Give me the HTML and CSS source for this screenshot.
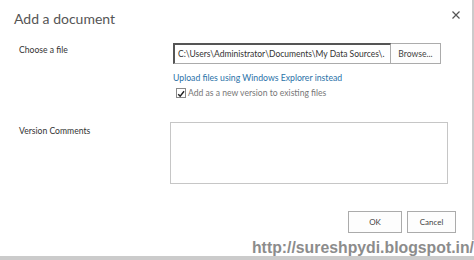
FILE: index.html
```html
<!DOCTYPE html>
<html lang="en">
<head>
  <meta charset="UTF-8" />
  <title>Add a document</title>
  <link rel="stylesheet" href="styles.css">
</head>
<body>
  <div class="dialog">
    <header class="dialog-head">
      <h1>Add a document</h1>
      <svg class="close" width="8" height="8" viewBox="0 0 8 8"><path d="M0.5 0.5 L7.5 7.5 M7.5 0.5 L0.5 7.5" stroke="#555" stroke-width="1.2"/></svg>
    </header>

    <div class="row">
      <label class="field-label">Choose a file</label>
      <div class="field">
        <div class="file-picker">
          <div class="file-path">C:\Users\Administrator\Documents\My Data Sources\.</div>
          <button class="btn browse">Browse...</button>
        </div>
        <a class="explorer-link" href="#">Upload files using Windows Explorer instead</a>
        <label class="check">
          <span class="box">
            <svg width="10" height="10" viewBox="0 0 10 10"><path d="M1.5 5.2 L4 7.8 L8.8 1.6" fill="none" stroke="#222" stroke-width="1.8"/></svg>
          </span>
          Add as a new version to existing files
        </label>
      </div>
    </div>

    <div class="row comments-row">
      <label class="field-label">Version Comments</label>
      <div class="field">
        <textarea class="comments"></textarea>
      </div>
    </div>

    <div class="actions">
      <button class="btn ok">OK</button>
      <button class="btn cancel">Cancel</button>
    </div>

    <div class="watermark">http://sureshpydi.blogspot.in/</div>
  </div>
</body>
</html>
```

FILE: styles.css
```css
body {
  margin: 0;
  width: 474px;
  height: 260px;
  overflow: hidden;
  background: #fff;
  font-family: Lato, 'Open Sans', sans-serif;
  color: #444;
}

.dialog {
  position: relative;
  box-sizing: border-box;
  width: 474px;
  height: 260px;
  border-right: 2px solid #cbcbcb;
  border-bottom: 4px solid #cbcbcb;
}

.dialog-head {
  display: flex;
  justify-content: space-between;
  align-items: flex-start;
  padding: 10px 12px 0 14px;
  height: 26px;
}

.dialog-head h1 {
  margin: 0;
  font-size: 14px;
  font-weight: 400;
  color: #555;
}

.close {
  margin-top: 1px;
}

.row {
  display: flex;
  padding-left: 19px;
  margin-top: 7px;
}

.field-label {
  width: 154px;
  font-size: 8.6px;
  padding-top: 2px;
  color: #333;
}

.field {
  display: flex;
  flex-direction: column;
}

.file-picker {
  display: flex;
  height: 21px;
}

.file-path {
  box-sizing: border-box;
  width: 218px;
  padding: 4px 3px 0;
  font-size: 8.5px;
  color: #333;
  white-space: nowrap;
  overflow: hidden;
  border: 1px solid #ababab;
  border-top: 2px solid #555;
  border-left: 2px solid #555;
}

.btn {
  box-sizing: border-box;
  height: 21px;
  padding: 0;
  font-family: inherit;
  font-size: 8px;
  color: #444;
  background: #fdfdfd;
  border: 1px solid #ababab;
}

.browse {
  width: 50px;
  font-size: 8.6px;
  border-left: none;
}

.explorer-link {
  margin-top: 8px;
  font-size: 8.7px;
  color: #2a72a8;
  text-decoration: none;
}

.check {
  display: flex;
  align-items: center;
  gap: 2px;
  margin-top: 5px;
  margin-left: 3px;
  font-size: 8.6px;
  color: #777;
}

.box {
  display: inline-flex;
  width: 10px;
  height: 10px;
  box-sizing: border-box;
  border: 1px solid #888;
}

.comments-row {
  margin-top: 24px;
}

.comments-row .field-label {
  padding-top: 4px;
  width: 151px;
}

.comments {
  box-sizing: border-box;
  width: 278px;
  height: 62px;
  border: 1px solid #c6c6c6;
  resize: none;
}

.actions {
  display: flex;
  justify-content: flex-end;
  gap: 5px;
  padding-right: 16px;
  margin-top: 27px;
}

.actions .ok {
  width: 54px;
  height: 22px;
}

.actions .cancel {
  width: 49px;
  height: 22px;
}

.watermark {
  position: absolute;
  right: -2px;
  bottom: 0;
  line-height: 16px;
  font-family: 'Liberation Sans', Arial, sans-serif;
  font-size: 15.8px;
  font-weight: bold;
  color: #8c8c8c;
  background: #fff;
}
```
